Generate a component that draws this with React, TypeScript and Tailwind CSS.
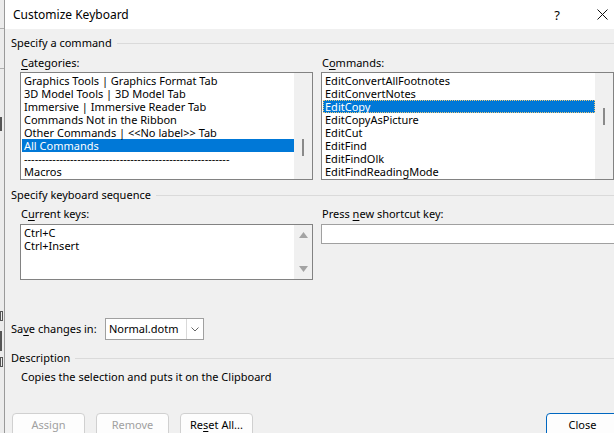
import React from 'react';

const FONT = { fontFamily: '"Segoe UI", "Noto Sans", "Liberation Sans", sans-serif' };

const categories = [
  'Graphics Tools | Graphics Format Tab',
  '3D Model Tools | 3D Model Tab',
  'Immersive | Immersive Reader Tab',
  'Commands Not in the Ribbon',
  'Other Commands | <<No label>> Tab',
  'All Commands',
  '----------------------------------------------------------',
  'Macros',
];

const commands = [
  'EditConvertAllFootnotes',
  'EditConvertNotes',
  'EditCopy',
  'EditCopyAsPicture',
  'EditCut',
  'EditFind',
  'EditFindOlk',
  'EditFindReadingMode',
];

function SectionHeader({ title }: { title: string }) {
  return (
    <div className="flex items-center h-4 pl-[6px]">
      <span className="leading-4 whitespace-nowrap">{title}</span>
      <div className="flex-1 h-px bg-[#dadada] ml-[5px]" />
    </div>
  );
}

function Label({ pre, u, post }: { pre: string; u: string; post: string }) {
  return (
    <div className="h-4 leading-4 pl-px whitespace-nowrap">
      {pre}
      <span className="underline underline-offset-2">{u}</span>
      {post}
    </div>
  );
}

function ListBox({
  items,
  selected,
  focus,
  thumbTop,
}: {
  items: string[];
  selected: number;
  focus?: boolean;
  thumbTop: number;
}) {
  return (
    <div className="h-[108px] border border-[#828282] bg-white flex overflow-hidden">
      <div className="flex-1 pt-[1px] pl-px overflow-hidden">
        {items.map((item, i) => (
          <div
            key={i}
            className={
              i === selected
                ? focus
                  ? 'h-[13px] leading-[11px] pl-[1px] bg-[#0078d7] text-white whitespace-nowrap border border-dotted border-[#e8c87a]'
                  : 'h-[13px] leading-[13px] pl-[2px] bg-[#0078d7] text-white whitespace-nowrap'
                : 'h-[13px] leading-[13px] pl-[2px] whitespace-nowrap'
            }
          >
            {item}
          </div>
        ))}
      </div>
      <div className="w-[18px] bg-[#f0f0f0] flex flex-col items-center">
        <div className="w-[2px] h-[17px] bg-[#8a8a8a]" style={{ marginTop: thumbTop }} />
      </div>
    </div>
  );
}

function Button({ children, disabled, primary }: { children: React.ReactNode; disabled?: boolean; primary?: boolean }) {
  return (
    <div
      className={
        'w-[73px] h-[24px] shrink-0 rounded-[4px] border bg-[#fdfdfd] flex items-center justify-center leading-4 ' +
        (primary ? 'border-[#0067c0] ' : 'border-[#d0d0d0] ') +
        (disabled ? 'text-[#a0a0a0]' : 'text-black')
      }
    >
      {children}
    </div>
  );
}

export default function App() {
  return (
    <div className="w-[614px] h-[433px] overflow-hidden flex bg-[#f0f0f0] text-[11px] text-black" style={FONT}>
      {/* window behind */}
      <div className="w-[5px] shrink-0 flex flex-col border-r border-[#9a9a9a] bg-[#ececec]">
        <div className="h-[28px]" />
        <div className="h-px bg-[#b0b0b0]" />
        <div className="h-[39px]" />
        <div className="h-px bg-[#b0b0b0]" />
        <div className="h-[48px]" />
        <div className="h-[14px] w-[2px] bg-[#555]" />
        <div className="h-[180px]" />
        <div className="h-[10px] w-[3px] border border-[#555]" />
        <div className="h-[10px]" />
        <div className="h-[20px] w-[2px] bg-[#555]" />
        <div className="h-[6px]" />
        <div className="h-[10px] w-[3px] border border-[#555]" />
      </div>

      <div className="flex-1 flex flex-col min-w-0">
        {/* title bar */}
        <div className="h-[29px] shrink-0 bg-white flex items-center pl-[8px]">
          <span className="flex-1 leading-4 text-[12px]">Customize Keyboard</span>
          <span className="w-[10px] text-center text-[13px] leading-4 mr-[35px]">?</span>
          <svg width="11" height="11" viewBox="0 0 11 11" className="mr-[6px]">
            <path d="M0.5 0.5 L10.5 10.5 M10.5 0.5 L0.5 10.5" stroke="#111" strokeWidth="1" />
          </svg>
        </div>

        {/* body */}
        <div className="flex-1 flex flex-col pt-[6px]">
          <SectionHeader title="Specify a command" />

          <div className="grid grid-cols-[293px_293px] gap-x-[8px] pl-[15px] mt-[4px]">
            <Label pre="" u="C" post="ategories:" />
            <Label pre="C" u="o" post="mmands:" />
            <div className="mt-px">
              <ListBox items={categories} selected={5} thumbTop={66} />
            </div>
            <div className="mt-px">
              <ListBox items={commands} selected={2} focus thumbTop={35} />
            </div>
          </div>

          <div className="mt-[7px]">
            <SectionHeader title="Specify keyboard sequence" />
          </div>

          <div className="grid grid-cols-[293px_300px] gap-x-[8px] pl-[15px] mt-[3px]">
            <Label pre="C" u="u" post="rrent keys:" />
            <Label pre="Press " u="n" post="ew shortcut key:" />
            <div className="mt-[2px] h-[56px] border border-[#828282] bg-white flex">
              <div className="flex-1 pt-[1px] pl-[3px]">
                <div className="h-[13px] leading-[13px]">Ctrl+C</div>
                <div className="h-[13px] leading-[13px]">Ctrl+Insert</div>
              </div>
              <div className="w-[18px] bg-[#f0f0f0] flex flex-col items-center justify-between py-[7px]">
                <svg width="9" height="6" viewBox="0 0 9 6">
                  <path d="M4.5 0 L9 6 L0 6 Z" fill="#a3a3a3" />
                </svg>
                <svg width="9" height="6" viewBox="0 0 9 6">
                  <path d="M0 0 L9 0 L4.5 6 Z" fill="#a3a3a3" />
                </svg>
              </div>
            </div>
            <div className="mt-[2px] h-[20px] border border-[#a0a0a0] bg-white" />
          </div>

          {/* save changes */}
          <div className="flex items-center pl-[6px] mt-[38px]">
            <span className="w-[94px] shrink-0 leading-4 whitespace-nowrap">
              Sa<span className="underline underline-offset-2">v</span>e changes in:
            </span>
            <div className="w-[99px] h-[22px] border border-[#a0a0a0] bg-white flex items-stretch">
              <span className="flex-1 pl-[3px] leading-[20px]">Normal.dotm</span>
              <div className="w-[17px] border-l border-[#d9d9d9] flex items-center justify-center">
                <svg width="8" height="5" viewBox="0 0 8 5">
                  <path d="M0.5 0.5 L4 4 L7.5 0.5" fill="none" stroke="#666" strokeWidth="1" />
                </svg>
              </div>
            </div>
          </div>

          <div className="mt-[10px]">
            <SectionHeader title="Description" />
          </div>
          <div className="pl-[16px] mt-[3px] leading-4">Copies the selection and puts it on the Clipboard</div>

          {/* buttons */}
          <div className="flex items-start pl-[7px] mt-[28px] gap-[11px]">
            <Button disabled>Assign</Button>
            <Button disabled>Remove</Button>
            <Button>
              Re<span className="underline underline-offset-2">s</span>et All...
            </Button>
            <div className="flex-1" />
            <div className="-mr-[5px]">
              <Button primary>Close</Button>
            </div>
          </div>
        </div>
      </div>
    </div>
  );
}
